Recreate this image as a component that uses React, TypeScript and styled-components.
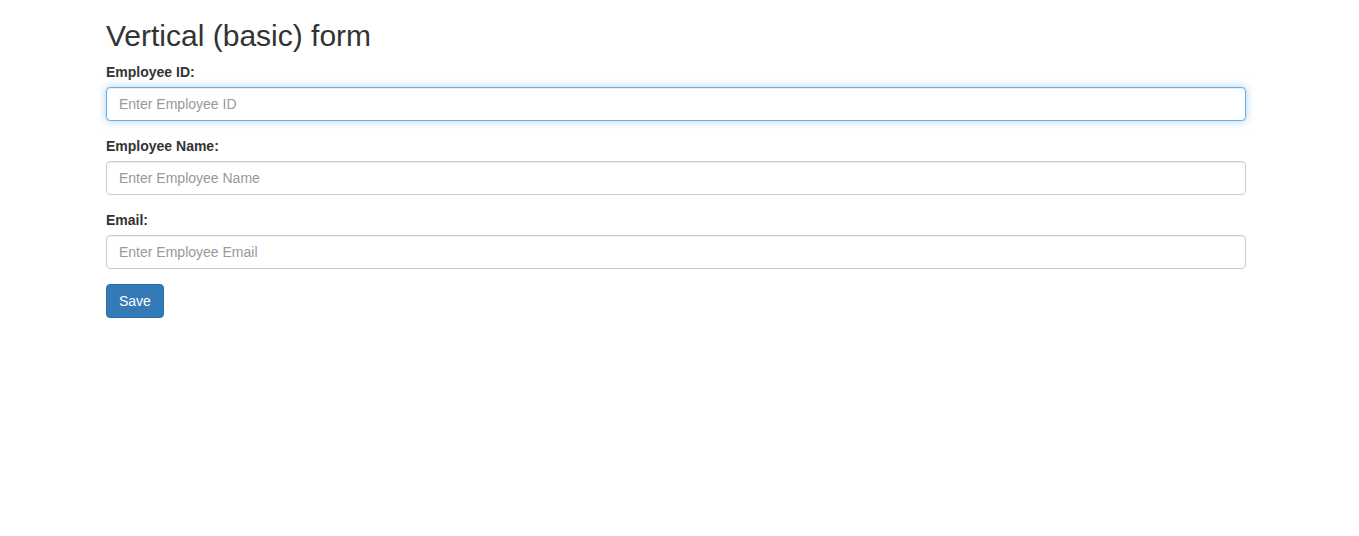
import React from "react";
import styled, { createGlobalStyle, css } from "styled-components";

const GlobalStyle = createGlobalStyle`
  * { box-sizing: border-box; }
  html, body { margin: 0; padding: 0; background: #fff; }
  body {
    font-family: "Liberation Sans", Arial, Helvetica, sans-serif;
    font-size: 14px;
    line-height: 1.42857143;
    color: #333;
  }
`;

const Container = styled.div`
  width: 1170px;
  margin-left: 91px;
  padding: 0 15px;
`;

const Title = styled.h2`
  font-size: 30px;
  font-weight: 500;
  line-height: 1.1;
  margin: 19px 0 10px;
  color: #333;
`;

const Form = styled.form`
  display: flex;
  flex-direction: column;
  align-items: flex-start;
`;

const Group = styled.div`
  display: flex;
  flex-direction: column;
  width: 100%;
  margin-bottom: 15px;
`;

const Label = styled.label`
  display: inline-block;
  font-weight: 700;
  margin-bottom: 5px;
  line-height: 20px;
`;

const Input = styled.input<{ $focused?: boolean }>`
  display: block;
  width: 100%;
  height: 34px;
  padding: 6px 12px;
  font-family: inherit;
  font-size: 14px;
  line-height: 1.42857143;
  color: #555;
  background: #fff;
  border: 1px solid #ccc;
  border-radius: 4px;
  box-shadow: inset 0 1px 1px rgba(0, 0, 0, 0.075);
  outline: 0;
  &::placeholder { color: #999; opacity: 1; }
  ${(p) =>
    p.$focused &&
    css`
      border-color: #66afe9;
      box-shadow: inset 0 1px 1px rgba(0, 0, 0, 0.075), 0 0 8px rgba(102, 175, 233, 0.6);
    `}
  &:focus {
    border-color: #66afe9;
    box-shadow: inset 0 1px 1px rgba(0, 0, 0, 0.075), 0 0 8px rgba(102, 175, 233, 0.6);
  }
`;

const Button = styled.button`
  display: inline-block;
  height: 34px;
  padding: 6px 12px;
  font-family: inherit;
  font-size: 14px;
  line-height: 1.42857143;
  color: #fff;
  background: #337ab7;
  border: 1px solid #2e6da4;
  border-radius: 4px;
  cursor: pointer;
`;

const fields = [
  { id: "empId", label: "Employee ID:", placeholder: "Enter Employee ID", type: "text" },
  { id: "empName", label: "Employee Name:", placeholder: "Enter Employee Name", type: "text" },
  { id: "email", label: "Email:", placeholder: "Enter Employee Email", type: "email" },
];

export default function App() {
  return (
    <>
      <GlobalStyle />
      <Container>
        <Title>Vertical (basic) form</Title>
        <Form onSubmit={(e) => e.preventDefault()}>
          {fields.map((f, i) => (
            <Group key={f.id}>
              <Label htmlFor={f.id}>{f.label}</Label>
              <Input
                id={f.id}
                type={f.type}
                placeholder={f.placeholder}
                $focused={i === 0}
                autoFocus={i === 0}
              />
            </Group>
          ))}
          <Button type="submit">Save</Button>
        </Form>
      </Container>
    </>
  );
}
